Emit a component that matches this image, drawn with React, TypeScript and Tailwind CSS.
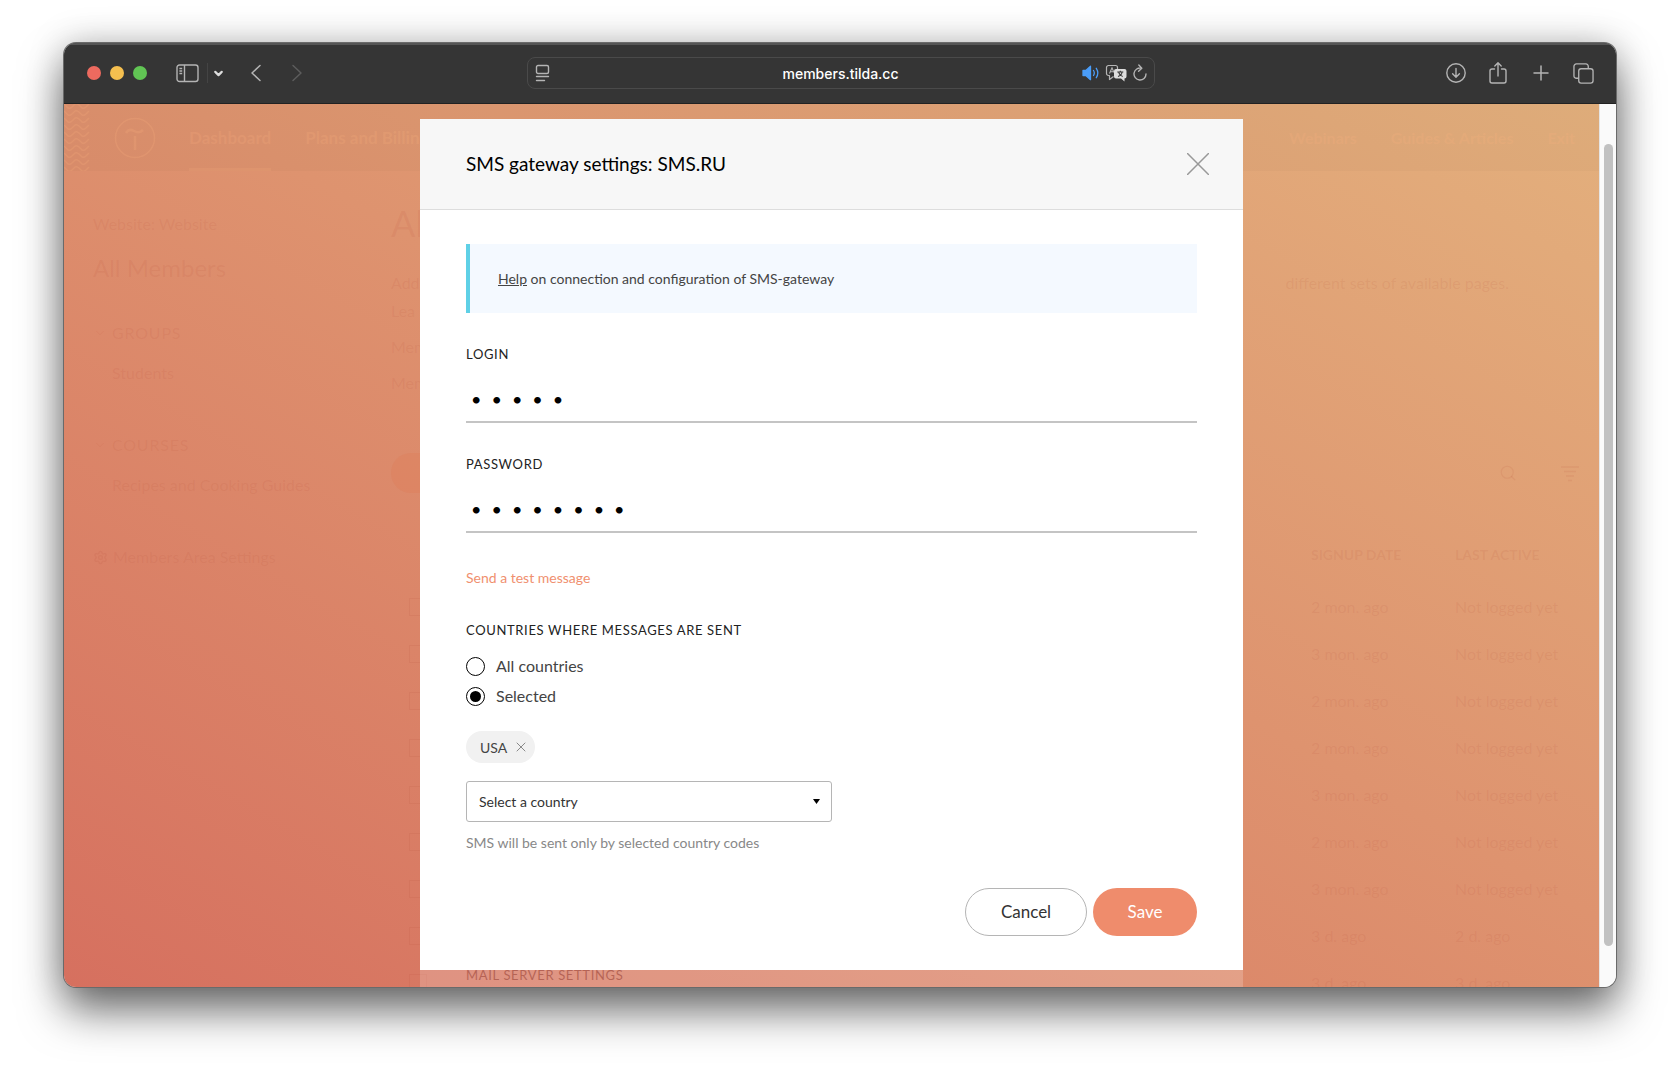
import React, { useState } from 'react';
import { ChevronDown, Plus, Search, Settings, X } from 'lucide-react';

type Member = { signup: string; lastActive: string };

const MEMBERS: Member[] = [
  { signup: '2 mon. ago', lastActive: 'Not logged yet' },
  { signup: '3 mon. ago', lastActive: 'Not logged yet' },
  { signup: '2 mon. ago', lastActive: 'Not logged yet' },
  { signup: '2 mon. ago', lastActive: 'Not logged yet' },
  { signup: '3 mon. ago', lastActive: 'Not logged yet' },
  { signup: '2 mon. ago', lastActive: 'Not logged yet' },
  { signup: '3 mon. ago', lastActive: 'Not logged yet' },
  { signup: '3 d. ago', lastActive: '2 d. ago' },
  { signup: '3 d. ago', lastActive: '3 d. ago' },
];

const WAVES = Array.from({ length: 11 }, (_, i) => i * 7);

const BrowserToolbar: React.FC = () => (
  <header className="flex h-[61px] shrink-0 items-center border-t-2 border-b border-t-[#555] border-b-[#222] bg-[#353535] pr-[22px] pb-[2px] pl-[23px] text-[#b4b4b4]">
    <div className="flex flex-1 items-center">
      <div className="flex gap-[9px]">
        <span className="size-[14px] rounded-full bg-[#ed6a5f]" />
        <span className="size-[14px] rounded-full bg-[#f5bf4f]" />
        <span className="size-[14px] rounded-full bg-[#61c554]" />
      </div>
      <button type="button" aria-label="Sidebar" className="ml-[29px]">
        <svg width="23" height="19" viewBox="0 0 23 19" fill="none" stroke="currentColor" strokeWidth="1.4">
          <rect x="1" y="1" width="21" height="16.5" rx="2.5" />
          <path d="M8.5 1v16.5M3.4 4.5h2.8M3.4 7h2.8M3.4 9.5h2.8" />
        </svg>
      </button>
      <span className="mr-1 ml-2 h-5 w-px bg-[#444]" />
      <button type="button" aria-label="Tab groups" className="text-[#ddd]">
        <ChevronDown size={13} strokeWidth={4} />
      </button>
      <button type="button" aria-label="Back" className="ml-5">
        <svg width="22" height="18" viewBox="0 0 22 18" fill="none" stroke="currentColor" strokeWidth="1.5" strokeLinecap="round" strokeLinejoin="round">
          <path d="M15 1.5L7 9l8 7.5" />
        </svg>
      </button>
      <button type="button" aria-label="Forward" className="ml-[19px] text-[#5c5c5c]">
        <svg width="22" height="18" viewBox="0 0 22 18" fill="none" stroke="currentColor" strokeWidth="1.5" strokeLinecap="round" strokeLinejoin="round">
          <path d="M7 1.5L15 9l-8 7.5" />
        </svg>
      </button>
    </div>
    <div className="flex h-8 w-[628px] items-center rounded-lg border border-[#4a4a4a] px-[7px]">
      <div className="flex flex-1">
        <svg width="16" height="18" viewBox="0 0 16 18" fill="none" stroke="currentColor" strokeWidth="1.4" strokeLinecap="round">
          <rect x="1.5" y="1.5" width="12" height="8" rx="1.5" />
          <path d="M1.5 12.5h12M1.5 16.5h8" />
        </svg>
      </div>
      <span className="font-[Inter,sans-serif] text-[14px] font-medium text-white">members.tilda.cc</span>
      <div className="flex flex-1 items-center justify-end gap-[5px]">
        <svg width="18" height="16" viewBox="0 0 18 16" fill="none" stroke="#4a9df8" strokeWidth="1.3" strokeLinecap="round">
          <path d="M1 5.5h2.8L8.5 1.3v13.4L3.8 10.5H1z" fill="#4a9df8" strokeLinejoin="round" />
          <path d="M11.5 5.5q1.6 2.5 0 5M14.3 3.3q3 4.7 0 9.4" />
        </svg>
        <svg width="23" height="18" viewBox="0 0 23 18" fill="none">
          <path
            d="M8.5 12.5L4.5 15.5V11.5H3.5a2 2 0 0 1-2-2v-6a2 2 0 0 1 2-2h7a2 2 0 0 1 2 2V5"
            stroke="currentColor"
            strokeWidth="1.2"
            strokeLinejoin="round"
          />
          <path d="M4.5 9.5L7 3.8l2 4.7M5.5 7.7h3" stroke="currentColor" strokeWidth="1.1" />
          <path d="M11 5h8.5a2 2 0 0 1 2 2v5.5a2 2 0 0 1-2 2V17.5L16 14.5H11a2 2 0 0 1-2-2V7a2 2 0 0 1 2-2z" fill="#ddd" />
          <path d="M12.3 8h6M15.3 6.7V8M13 12.5q4-1.5 4-4.5M13.7 8.5q1 3 4 4" stroke="#353535" strokeWidth="1.1" />
        </svg>
        <button type="button" aria-label="Reload">
          <svg width="14" height="18" viewBox="0 0 14 18" fill="none" stroke="currentColor" strokeWidth="1.4" strokeLinecap="round" strokeLinejoin="round">
            <path d="M8.5 4.2A6 6 0 1 0 13 10M5.8 1l3 3.2-3.2 3" />
          </svg>
        </button>
      </div>
    </div>
    <div className="flex flex-1 items-center justify-end gap-5">
      <button type="button" aria-label="Downloads">
        <svg width="22" height="22" viewBox="0 0 22 22" fill="none" stroke="currentColor" strokeWidth="1.4" strokeLinecap="round" strokeLinejoin="round">
          <circle cx="11" cy="11" r="9.2" />
          <path d="M11 6.5V15M7.6 11.8L11 15.2l3.4-3.4" />
        </svg>
      </button>
      <button type="button" aria-label="Share">
        <svg width="22" height="24" viewBox="0 0 22 24" fill="none" stroke="currentColor" strokeWidth="1.4" strokeLinecap="round" strokeLinejoin="round">
          <path d="M7.5 8H5a2 2 0 0 0-2 2v10a2 2 0 0 0 2 2h12a2 2 0 0 0 2-2V10a2 2 0 0 0-2-2h-2.5" />
          <path d="M11 15V2M7.8 5L11 1.8 14.2 5" />
        </svg>
      </button>
      <button type="button" aria-label="New tab">
        <Plus size={24} strokeWidth={1.5} />
      </button>
      <button type="button" aria-label="Tab overview">
        <svg width="21" height="21" viewBox="0 0 22 22" fill="none" stroke="currentColor" strokeWidth="1.4" strokeLinejoin="round">
          <rect x="6" y="6" width="15" height="15" rx="2.5" />
          <path d="M6 16H3.5A2.5 2.5 0 0 1 1 13.5v-10A2.5 2.5 0 0 1 3.5 1h10A2.5 2.5 0 0 1 16 3.5V6" />
        </svg>
      </button>
    </div>
  </header>
);

const MembersPage: React.FC = () => (
  <div className="flex-1 overflow-hidden bg-linear-to-tr from-[#d6705f] to-[#e3b07d] text-[16px] text-[#b44632]/10">
    <nav className="flex h-[67px] items-center bg-black/2 text-[17px] font-bold text-[#ffb482]/20">
      <svg width="26" height="67" viewBox="0 0 26 67" fill="none" stroke="currentColor" strokeWidth="1.5">
        {WAVES.map((y) => (
          <path key={y} d={`M0 ${y}l4 4q2 1 4-1l3-3q2-1 4 1l3 3q2 1 4-1l3-3`} />
        ))}
      </svg>
      <svg className="ml-6" width="42" height="42" viewBox="0 0 42 42" fill="none" stroke="currentColor" strokeWidth="1.5">
        <circle cx="21" cy="21" r="19.5" />
        <path d="M12 16q3-5 8-2t9-1" strokeWidth="2.5" />
        <path d="M21 19v14" strokeWidth="2.5" />
      </svg>
      <a href="#dashboard" className="ml-[33px] flex h-full items-center border-t-[3px] border-b-[3px] border-t-transparent border-b-[#ffb482]/15">
        Dashboard
      </a>
      <a href="#plans" className="ml-[34px]">
        Plans and Billing
      </a>
      <div className="ml-auto flex gap-[34px] pr-6 text-[16px]">
        <a href="#webinars">Webinars</a>
        <a href="#guides">Guides &amp; Articles</a>
        <a href="#exit">Exit</a>
      </div>
    </nav>
    <div className="flex pt-[34px]">
      <aside className="w-[327px] shrink-0 pt-[2px] pl-[29px]">
        <p className="leading-[34px]">Website: Website</p>
        <p className="mt-2 text-[24px] leading-[38px]">All Members</p>
        <p className="mt-[34px] flex items-center leading-[24px] tracking-wider">
          <ChevronDown size={14} strokeWidth={1.5} className="mr-[5px]" />
          GROUPS
        </p>
        <p className="mt-4 pl-[19px] leading-[24px]">Students</p>
        <p className="mt-12 flex items-center leading-[24px] tracking-wider">
          <ChevronDown size={14} strokeWidth={1.5} className="mr-[5px]" />
          COURSES
        </p>
        <p className="mt-4 pl-[19px] leading-[24px]">Recipes and Cooking Guides</p>
        <p className="mt-12 flex items-center leading-[24px]">
          <Settings size={15} className="mr-[5px]" />
          Members Area Settings
        </p>
      </aside>
      <main className="flex-1">
        <h1 className="text-[36px] leading-[36px]">All Members</h1>
        <div className="mt-7 flex justify-between pr-[90px] leading-[28px]">
          <p>Add</p>
          <p>different sets of available pages.</p>
        </div>
        <p className="leading-[28px]">Lea</p>
        <p className="mt-2 leading-[28px]">Mem</p>
        <p className="mt-2 leading-[28px]">Mem</p>
        <div className="mt-14 flex items-center">
          <div className="h-10 w-40 rounded-full bg-[#e07850]/25" />
          <Search size={18} strokeWidth={1.5} className="mr-11 ml-auto" />
          <svg className="mr-5" width="18" height="18" viewBox="0 0 18 18" fill="none" stroke="currentColor" strokeWidth="1.5">
            <path d="M0 3h18M3 7.5h12M5 12h8M7 16.5h4" />
          </svg>
        </div>
        <table className="mt-[33px] w-full text-left">
          <thead>
            <tr className="h-[57px] text-[14px]">
              <th />
              <th className="w-36">SIGNUP DATE</th>
              <th className="w-36">LAST ACTIVE</th>
            </tr>
          </thead>
          <tbody>
            {MEMBERS.map((member, index) => (
              <tr key={index} className="h-[47px]">
                <td className="pl-[18px]">
                  <div className="size-[18px] border border-current" />
                </td>
                <td>{member.signup}</td>
                <td>{member.lastActive}</td>
              </tr>
            ))}
          </tbody>
        </table>
      </main>
    </div>
  </div>
);

type SecretFieldProps = { id: string; label: string; value: string; onChange: (value: string) => void };

const SecretField: React.FC<SecretFieldProps> = ({ id, label, value, onChange }) => (
  <div className="mt-[31px]">
    <label htmlFor={id} className="block text-[13px] leading-5 tracking-wider text-[#222]">
      {label}
    </label>
    <input
      id={id}
      type="password"
      value={value}
      onChange={(e) => onChange(e.target.value)}
      className="mt-[17px] h-[42px] w-full border-b-2 border-[#c4c4c4] pb-1 pl-[5px] text-[18px] tracking-[10px] text-black outline-none"
    />
  </div>
);

const SmsGatewayModal: React.FC = () => {
  const [login, setLogin] = useState('login');
  const [password, setPassword] = useState('password');
  const [scope, setScope] = useState('selected');
  const [countries, setCountries] = useState(['USA']);

  return (
    <section role="dialog" aria-labelledby="modal-title" className="mx-auto w-full max-w-[823px] bg-white">
      <div className="flex h-[91px] items-center justify-between border-b border-[#ddd] bg-[#f7f7f7] pr-[34px] pl-[46px]">
        <h2 id="modal-title" className="text-[19px] text-black">
          SMS gateway settings: SMS.RU
        </h2>
        <button type="button" aria-label="Close" className="text-[#999]">
          <svg width="22" height="22" viewBox="0 0 22 22" fill="none" stroke="currentColor" strokeWidth="1.5">
            <path d="M0 0l22 22M22 0L0 22" />
          </svg>
        </button>
      </div>
      <form className="px-[46px] pt-[34px] pb-[34px] text-[#444]" onSubmit={(e) => e.preventDefault()}>
        <p className="border-l-4 border-[#5fd0e6] bg-[#f4f9ff] px-7 text-[14px] leading-[69px]">
          <a href="#help" className="underline">
            Help
          </a>{' '}
          on connection and configuration of SMS-gateway
        </p>
        <SecretField id="login" label="LOGIN" value={login} onChange={setLogin} />
        <SecretField id="password" label="PASSWORD" value={password} onChange={setPassword} />
        <a href="#test" className="mt-[33px] block text-[14px] leading-6 text-[#f0906f]">
          Send a test message
        </a>
        <fieldset className="mt-[30px]">
          <legend className="text-[13px] leading-5 tracking-wider text-[#222]">COUNTRIES WHERE MESSAGES ARE SENT</legend>
          {[
            { value: 'all', label: 'All countries' },
            { value: 'selected', label: 'Selected' },
          ].map((option) => (
            <label key={option.value} className="flex h-[30px] items-center gap-[11px] text-[16px] first-of-type:mt-[11px]">
              <input
                type="radio"
                name="scope"
                value={option.value}
                checked={scope === option.value}
                onChange={() => setScope(option.value)}
                className="size-[19px] appearance-none rounded-full border border-black bg-white bg-clip-content p-[3px] checked:bg-black"
              />
              {option.label}
            </label>
          ))}
        </fieldset>
        <div className="mt-5 flex h-8 gap-2">
          {countries.map((country) => (
            <span key={country} className="flex items-center gap-[6px] rounded-full bg-[#f1f1f1] pr-[6px] pl-[14px] text-[14px]">
              {country}
              <button
                type="button"
                aria-label={`Remove ${country}`}
                className="text-[#888]"
                onClick={() => setCountries(countries.filter((c) => c !== country))}
              >
                <X size={16} strokeWidth={1.5} />
              </button>
            </span>
          ))}
        </div>
        <div className="relative mt-[18px] w-1/2">
          <select
            aria-label="Select a country"
            className="h-[41px] w-full appearance-none rounded-[3px] border border-[#b5b5b5] bg-white px-3 text-[14px] text-[#333]"
          >
            <option>Select a country</option>
          </select>
          <svg className="pointer-events-none absolute top-[18px] right-3" width="7" height="5" viewBox="0 0 7 5">
            <path d="M0 0h7L3.5 5z" />
          </svg>
        </div>
        <p className="mt-[9px] text-[14px] leading-6 text-[#888]">SMS will be sent only by selected country codes</p>
        <div className="mt-[33px] flex justify-end gap-[6px] text-[17px]">
          <button type="button" className="h-12 w-[122px] rounded-full border border-[#b5b5b5] text-[#333]">
            Cancel
          </button>
          <button type="submit" className="h-12 w-[104px] rounded-full bg-[#ef8c6c] text-white">
            Save
          </button>
        </div>
      </form>
    </section>
  );
};

const App: React.FC = () => (
  <div className="h-screen overflow-hidden bg-white px-16 pt-[43px] pb-[84px] font-[Lato,sans-serif]">
    <div className="flex h-full flex-col overflow-hidden rounded-xl shadow-[0_0_0_1px_#6a6a6a,0_24px_44px_rgba(0,0,0,0.55),0_0_36px_rgba(0,0,0,0.22)]">
      <BrowserToolbar />
      <div className="relative flex min-h-0 flex-1">
        <MembersPage />
        <div className="w-[17px] shrink-0 border-l border-[#e4e4e4] bg-[#fafafa] pt-10 pb-[41px]">
          <div className="mx-auto h-full w-[9px] rounded-full bg-[#c1c1c1]" />
        </div>
        <div className="absolute inset-y-0 right-[17px] left-0 overflow-hidden pt-[15px]">
          <SmsGatewayModal />
          <div className="mx-auto h-10 w-full max-w-[823px] bg-white/20 px-[46px] text-[13px] leading-[10px] tracking-wider text-[#8c3228]/50">
            MAIL SERVER SETTINGS
          </div>
        </div>
      </div>
    </div>
  </div>
);

export default App;
